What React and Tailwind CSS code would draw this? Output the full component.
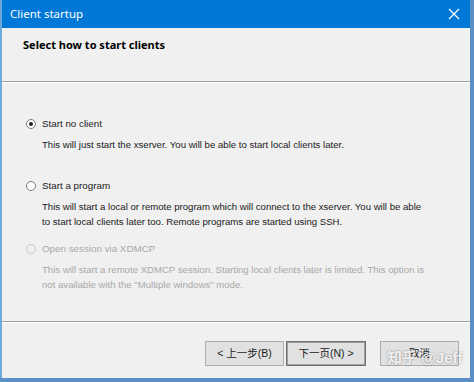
import React from 'react';

const Radio = ({ checked, disabled }) => (
  <span
    className={`flex h-[10px] w-[10px] shrink-0 items-center justify-center rounded-full border ${
      disabled ? 'border-[#c8c8c8] bg-[#f0f0f0]' : 'border-[#7a7a7a] bg-white'
    }`}
  >
    {checked && <span className="h-[4px] w-[4px] rounded-full bg-[#222]" />}
  </span>
);

const Option = ({ label, lines, checked, disabled, className }) => (
  <div className={`flex flex-col ${className || ''}`}>
    <div className="flex items-center gap-[6px] pl-[24px]">
      <Radio checked={checked} disabled={disabled} />
      <span className={`text-[9.8px] leading-[14px] ${disabled ? 'text-[#a8a8a8]' : 'text-[#1a1a1a]'}`}>{label}</span>
    </div>
    <div className={`mt-[6px] pl-[40px] pr-[30px] text-[9.6px] leading-[15px] ${disabled ? 'text-[#a8a8a8]' : 'text-[#1a1a1a]'}`}>
      {lines.map((l, i) => (
        <div key={i} className="whitespace-nowrap">{l}</div>
      ))}
    </div>
  </div>
);

const Btn = ({ children, primary }) => (
  <button
    className={`flex h-[25px] w-full items-center justify-center border bg-[#e1e1e1] text-[10.5px] text-[#1a1a1a] ${
      primary ? 'border-[#707070] shadow-[inset_0_0_0_1px_#a0a0a0]' : 'border-[#adadad]'
    }`}
  >
    {children}
  </button>
);

export default function App() {
  return (
    <div className="h-[382px] w-[474px] overflow-hidden bg-[#5b8fc6] font-['Liberation_Sans','Noto_Sans_CJK_SC',sans-serif]">
      <div className="flex h-[378px] w-[470px] flex-col border-l-2 border-[#6fa8dc] bg-[#f0f0f0]">
        {/* title bar */}
        <div className="flex h-[28px] items-center justify-between bg-[#0078d7] pl-[8px] pr-[10px] text-white">
          <span className="font-['Noto_Sans',sans-serif] text-[11.5px]">Client startup</span>
          <svg width="12" height="12" viewBox="0 0 12 12" stroke="white" strokeWidth="1.3">
            <path d="M1 1l10 10M11 1L1 11" />
          </svg>
        </div>
        {/* header */}
        <div className="h-[54px] border-b border-[#a0a0a0] shadow-[0_1px_0_#ffffff] pl-[21px] pt-[9px]">
          <div className="font-['Noto_Sans',sans-serif] text-[11px] font-bold text-black">Select how to start clients</div>
        </div>
        {/* options */}
        <div className="flex flex-1 flex-col pt-[35px]">
          <Option
            checked
            label="Start no client"
            lines={['This will just start the xserver. You will be able to start local clients later.']}
          />
          <Option
            className="mt-[27px]"
            label="Start a program"
            lines={[
              'This will start a local or remote program which will connect to the xserver. You will be able',
              'to start local clients later too. Remote programs are started using SSH.',
            ]}
          />
          <Option
            className="mt-[13px]"
            disabled
            label="Open session via XDMCP"
            lines={[
              'This will start a remote XDMCP session. Starting local clients later is limited. This option is',
              'not available with the "Multiple windows" mode.',
            ]}
          />
        </div>
        {/* footer */}
        <div className="relative h-[57px] border-t border-[#a0a0a0] shadow-[inset_0_1px_0_#ffffff]">
          <div className="flex items-center pt-[19px] pl-[203px]">
            <div className="w-[79px]"><Btn>&lt; 上一步(B)</Btn></div>
            <div className="ml-[2px] w-[80px]"><Btn primary>下一页(N) &gt;</Btn></div>
            <div className="ml-[14px] w-[79px]"><Btn>取消</Btn></div>
          </div>
          <div className="pointer-events-none absolute left-[385px] top-[25px] text-[15px] font-bold text-white/85 [text-shadow:0_0_2px_rgba(0,0,0,0.45)]">
            知乎 @Jeff
          </div>
        </div>
      </div>
    </div>
  );
}
